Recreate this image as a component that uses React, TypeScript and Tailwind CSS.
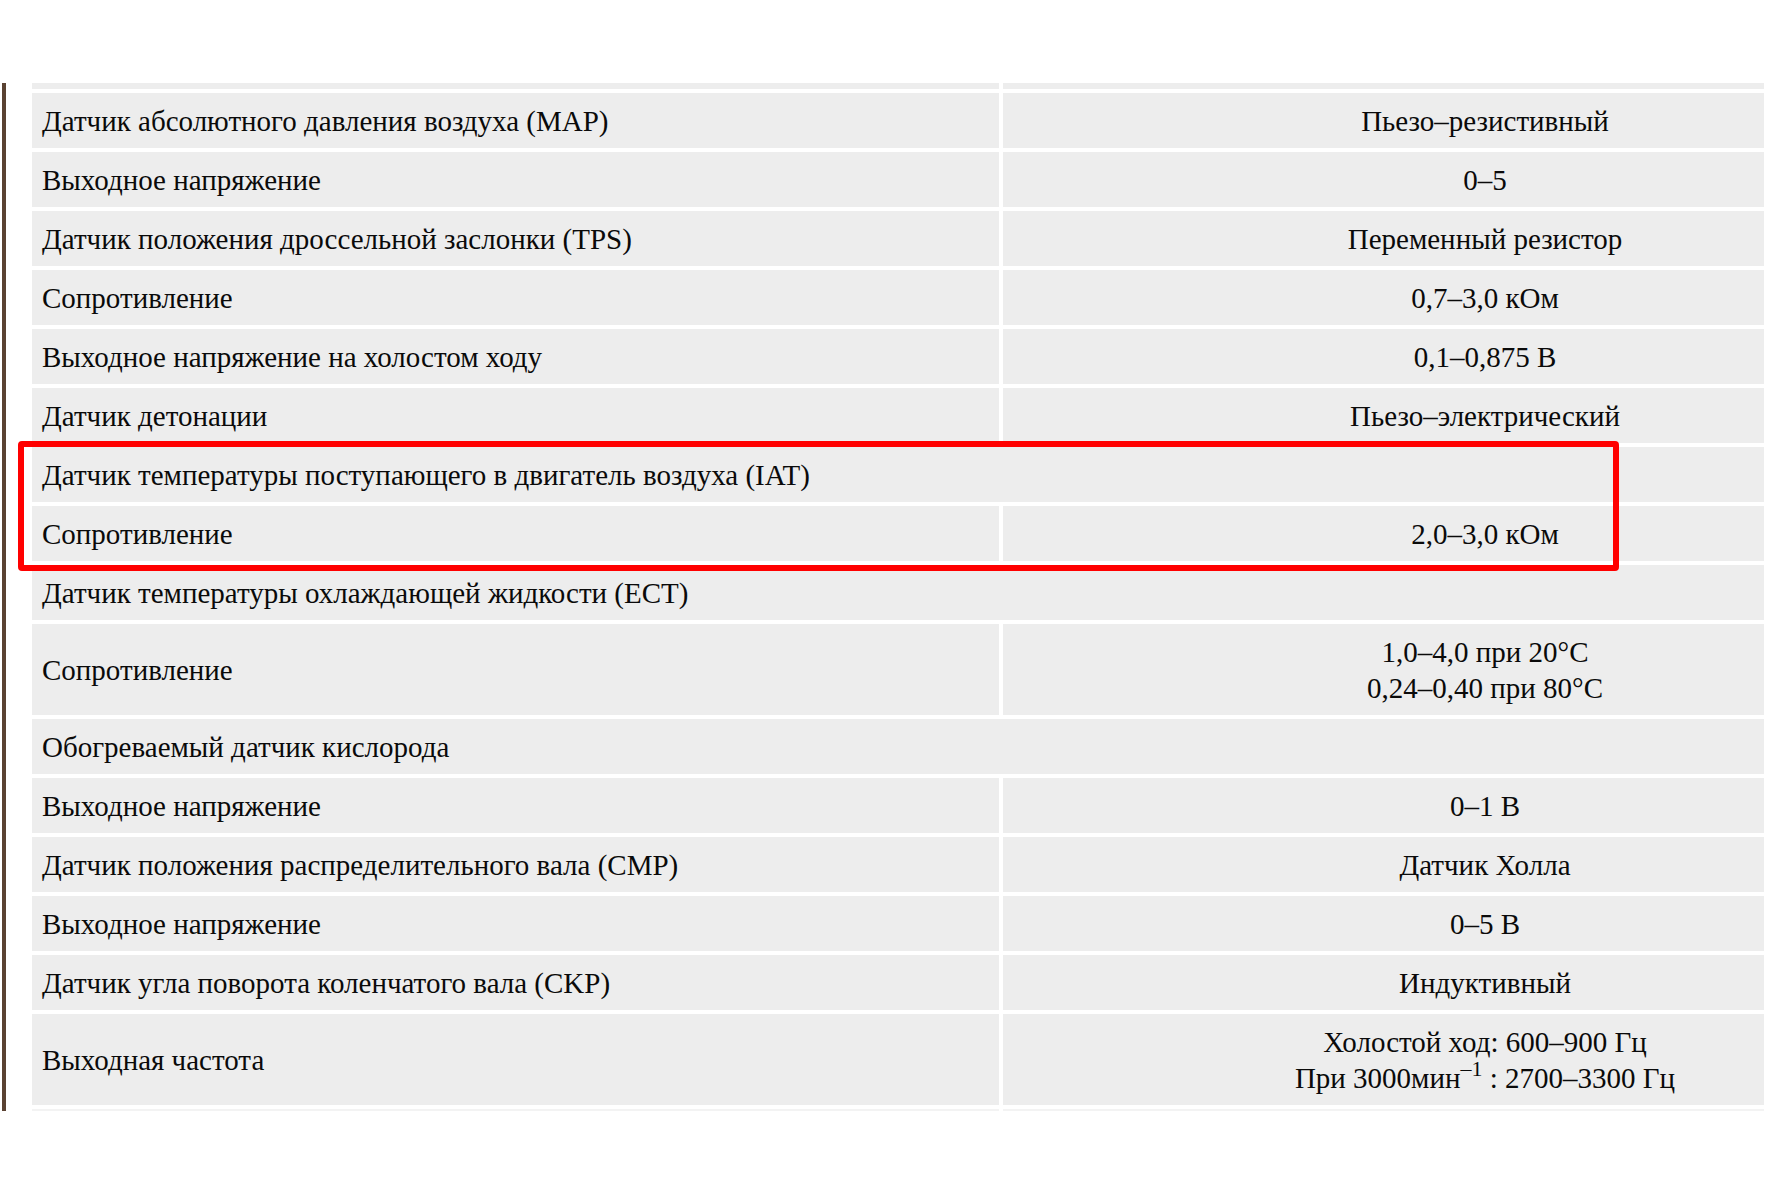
import React from "react"

type Row = {
    label: string
    value?: React.ReactNode
    span?: boolean
}

const rows: Row[] = [
    { label: "Датчик абсолютного давления воздуха (MAP)", value: "Пьезо–резистивный" },
    { label: "Выходное напряжение", value: "0–5" },
    { label: "Датчик положения дроссельной заслонки (TPS)", value: "Переменный резистор" },
    { label: "Сопротивление", value: "0,7–3,0 кОм" },
    { label: "Выходное напряжение на холостом ходу", value: "0,1–0,875 В" },
    { label: "Датчик детонации", value: "Пьезо–электрический" },
    { label: "Датчик температуры поступающего в двигатель воздуха (IAT)", span: true },
    { label: "Сопротивление", value: "2,0–3,0 кОм" },
    { label: "Датчик температуры охлаждающей жидкости (ECT)", span: true },
    {
        label: "Сопротивление",
        value: (
            <>
                1,0–4,0 при 20°C
                <br />
                0,24–0,40 при 80°C
            </>
        ),
    },
    { label: "Обогреваемый датчик кислорода", span: true },
    { label: "Выходное напряжение", value: "0–1 В" },
    { label: "Датчик положения распределительного вала (CMP)", value: "Датчик Холла" },
    { label: "Выходное напряжение", value: "0–5 В" },
    { label: "Датчик угла поворота коленчатого вала (CKP)", value: "Индуктивный" },
    {
        label: "Выходная частота",
        value: (
            <>
                Холостой ход: 600–900 Гц
                <br />
                При 3000мин<span className="inline-block text-[22px] leading-none align-top -mt-[2px]">–1</span> : 2700–3300 Гц
            </>
        ),
    },
]

export default function App() {
    return (
        <div
            className="relative w-[1772px] h-[1181px] bg-white text-[#0a0a0a] overflow-hidden"
            style={{ fontFamily: '"Liberation Serif", "Times New Roman", serif' }}
        >
            <div className="flex pt-[83px] pl-[2px]">
                {/* left rule */}
                <div className="w-[4px] bg-[#5a4232]" />

                <div className="ml-[26px] grid grid-cols-[967px_761px] gap-[4px] text-[29px] leading-[36px]">
                    <div className="h-[6px] bg-[#ededed]" />
                    <div className="h-[6px] bg-[#ededed]" />

                    {rows.map((row, i) =>
                        row.span ? (
                            <div key={i} className="col-span-2 bg-[#ededed] py-[9.5px] pl-[10px]">
                                {row.label}
                            </div>
                        ) : (
                            <React.Fragment key={i}>
                                <div className="bg-[#ededed] py-[9.5px] pl-[10px] flex items-center">
                                    {row.label}
                                </div>
                                <div className="bg-[#ededed] py-[9.5px] pl-[203px] text-center">
                                    {row.value}
                                </div>
                            </React.Fragment>
                        )
                    )}

                    <div className="h-[2px] bg-[#f3f3f3]" />
                    <div className="h-[2px] bg-[#f3f3f3]" />
                </div>
            </div>

            {/* highlight around IAT block */}
            <div className="absolute left-[18px] top-[441px] w-[1601px] h-[130px] border-[6px] border-[#ff0000] rounded-[4px]" />
        </div>
    )
}
